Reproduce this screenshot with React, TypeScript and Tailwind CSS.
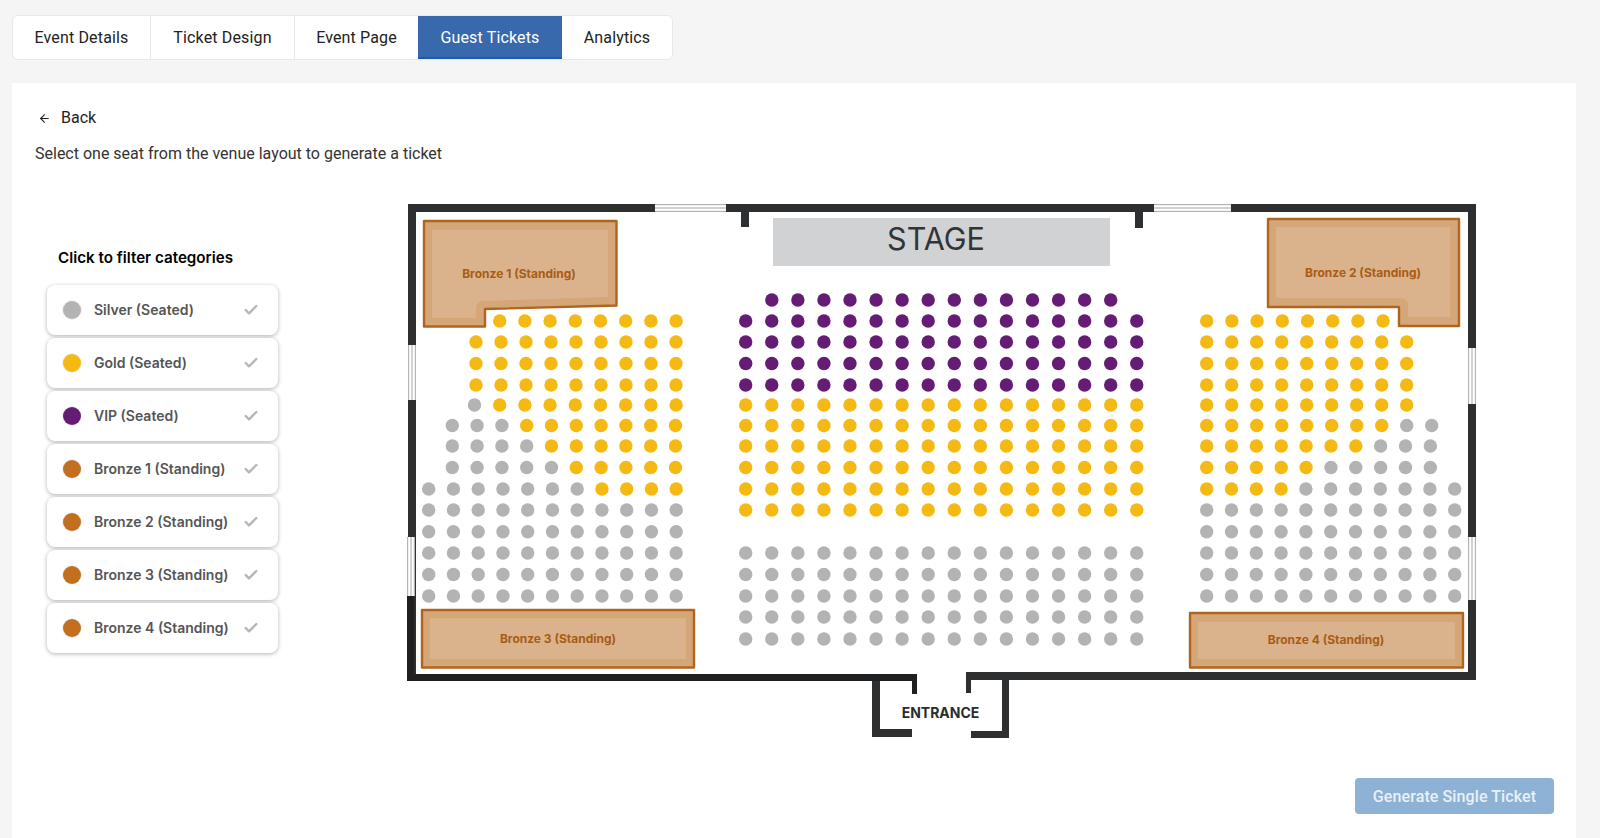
import { ArrowLeft, Check } from "lucide-react";

const GOLD = "#f5b914";
const GRAY = "#b3b3b3";
const VIP = "#651c74";

const tabs = [
  { name: "Event Details", width: "w-[138px] border-r border-[#e7e8ea]" },
  { name: "Ticket Design", width: "w-[144px] border-r border-[#e7e8ea]" },
  { name: "Event Page", width: "w-[123px]" },
  { name: "Guest Tickets", width: "w-[144px] bg-[#3769ac] text-white shadow-[inset_0_-2px_0_#1f5ca8]" },
  { name: "Analytics", width: "w-[110px]" },
];
const categories = [
  { name: "Silver (Seated)", color: GRAY },
  { name: "Gold (Seated)", color: GOLD },
  { name: "VIP (Seated)", color: VIP },
  { name: "Bronze 1 (Standing)", color: "#c2701f" },
  { name: "Bronze 2 (Standing)", color: "#c2701f" },
  { name: "Bronze 3 (Standing)", color: "#c2701f" },
  { name: "Bronze 4 (Standing)", color: "#c2701f" },
];

type Seat = { x: number; y: number; c: string };

// start x, step, y, then [colour, count] runs from left to right
function row(x0: number, step: number, y: number, runs: [string, number][]): Seat[] {
  const out: Seat[] = [];
  let i = 0;
  for (const [c, n] of runs) {
    for (let k = 0; k < n; k++) {
      out.push({ x: x0 + step * i, y, c });
      i++;
    }
  }
  return out;
}

const seats: Seat[] = [
  // center block
  ...row(771.8, 26.07, 300, [[VIP, 14]]),
  ...[321, 342, 363.5, 385].flatMap((y) => row(745.7, 26.07, y, [[VIP, 16]])),
  ...[405, 425.5, 446, 467.5, 489, 510].flatMap((y) => row(745.7, 26.07, y, [[GOLD, 16]])),
  ...[553, 574.5, 596, 617, 639].flatMap((y) => row(745.7, 26.07, y, [[GRAY, 16]])),
  // left block
  ...row(499.7, 25.2, 321, [[GOLD, 8]]),
  ...[342, 363.5, 385].flatMap((y) => row(476, 25, y, [[GOLD, 9]])),
  ...row(474.5, 25.2, 405, [[GRAY, 1], [GOLD, 8]]),
  ...row(452.3, 24.8, 425.5, [[GRAY, 3], [GOLD, 7]]),
  ...row(452.3, 24.8, 446, [[GRAY, 4], [GOLD, 6]]),
  ...row(452.3, 24.8, 467.5, [[GRAY, 5], [GOLD, 5]]),
  ...row(428.7, 24.75, 489, [[GRAY, 7], [GOLD, 4]]),
  ...[510, 531.7, 553, 574.5, 596].flatMap((y) => row(428.7, 24.75, y, [[GRAY, 11]])),
  // right block
  ...row(1206.7, 25.2, 321, [[GOLD, 8]]),
  ...[342, 363.5, 385, 405].flatMap((y) => row(1206.7, 25, y, [[GOLD, 9]])),
  ...row(1206.7, 25, 425.5, [[GOLD, 8], [GRAY, 2]]),
  ...row(1206.7, 24.85, 446, [[GOLD, 7], [GRAY, 3]]),
  ...row(1206.7, 24.85, 467.5, [[GOLD, 5], [GRAY, 5]]),
  ...row(1206.7, 24.8, 489, [[GOLD, 4], [GRAY, 7]]),
  ...[510, 531.7, 553, 574.5, 596].flatMap((y) => row(1206.7, 24.8, y, [[GRAY, 11]])),
];

function HWindow({ x, w, y }: { x: number; w: number; y: number }) {
  return (
    <g>
      <rect x={x} y={y} width={w} height={8} fill="#fff" />
      <rect x={x} y={y} width={w} height={1.2} fill="#b5b5b5" />
      <rect x={x} y={y + 3.4} width={w} height={1.2} fill="#b5b5b5" />
      <rect x={x} y={y + 6.8} width={w} height={1.2} fill="#b5b5b5" />
    </g>
  );
}

function VWindow({ x, y, h }: { x: number; y: number; h: number }) {
  return (
    <g>
      <rect x={x} y={y} width={8} height={h} fill="#fff" />
      <rect x={x} y={y} width={1.2} height={h} fill="#b5b5b5" />
      <rect x={x + 3.4} y={y} width={1.2} height={h} fill="#b5b5b5" />
      <rect x={x + 6.8} y={y} width={1.2} height={h} fill="#b5b5b5" />
    </g>
  );
}

function Zone({ outer, inner, label, lx, ly }: { outer: string; inner: string; label: string; lx: number; ly: number }) {
  return (
    <g>
      <path d={outer} fill="#d4a678" stroke="#b0651e" strokeWidth={2.4} strokeLinejoin="round" />
      <path d={inner} fill="#dab38c" />
      <text
        x={lx}
        y={ly}
        textAnchor="middle"
        dominantBaseline="central"
        fill="#a85c16"
        className="[font-family:Inter,sans-serif] text-[12px] font-bold"
      >
        {label}
      </text>
    </g>
  );
}

function VenueMap() {
  const wall = "#2e2f31";
  return (
    <svg viewBox="400 200 1085 545" className="h-[545px] w-[1085px] shrink-0">
      {/* walls */}
      <rect x={408} y={204} width={1068} height={8} fill={wall} />
      <rect x={408} y={204} width={8} height={475} fill={wall} />
      <rect x={1468} y={204} width={8} height={476} fill={wall} />
      <rect x={407} y={596} width={7} height={85} fill="#1f2022" />
      <rect x={407} y={674} width={510} height={7} fill="#1f2022" />
      <rect x={912} y={674} width={5} height={20} fill="#1f2022" />
      <rect x={966} y={672} width={510} height={8} fill={wall} />
      <rect x={966} y={672} width={5} height={21} fill={wall} />
      <path d="M872 681h8v48h32v8h-40z" fill={wall} />
      <path d="M1002 680h7v58h-38v-7h31z" fill={wall} />
      <rect x={741} y={212} width={8} height={15} fill={wall} />
      <rect x={1135} y={212} width={8} height={16} fill={wall} />

      {/* windows */}
      <HWindow x={655} w={71} y={204} />
      <HWindow x={1154} w={77} y={204} />
      <VWindow x={408} y={345} h={55} />
      <VWindow x={407} y={537} h={59} />
      <VWindow x={1468} y={348} h={56} />
      <VWindow x={1468} y={537} h={63} />

      {/* stage */}
      <rect x={773} y={218} width={337} height={48} fill="#d1d2d4" />
      <text
        x={936}
        y={238}
        textAnchor="middle"
        dominantBaseline="central"
        fill="#333436"
        className="[font-family:Inter,sans-serif] text-[30.5px]"
      >
        STAGE
      </text>

      {/* standing zones */}
      <Zone
        outer="M424 221H616.5V305.5L485 309V326.5H424Z"
        inner="M432 230H608V297L484 301Q476 301 476 309V318H432Z"
        label="Bronze 1 (Standing)"
        lx={519}
        ly={273}
      />
      <Zone
        outer="M1268 219H1459V326H1399V307H1268Z"
        inner="M1276 227H1450V317H1408V306Q1408 298 1400 298H1276Z"
        label="Bronze 2 (Standing)"
        lx={1363}
        ly={272}
      />
      <Zone
        outer="M422 610H694V667.5H422Z"
        inner="M430 618H686V659H430Z"
        label="Bronze 3 (Standing)"
        lx={558}
        ly={638}
      />
      <Zone
        outer="M1190 613H1463V667.5H1190Z"
        inner="M1198 622H1455V659H1198Z"
        label="Bronze 4 (Standing)"
        lx={1326}
        ly={639}
      />

      {/* seats */}
      {seats.map((s, i) => (
        <circle key={i} cx={s.x} cy={s.y} r={6.7} fill={s.c} />
      ))}

      <text
        x={940.5}
        y={712}
        textAnchor="middle"
        dominantBaseline="central"
        fill="#2b2c2e"
        className="[font-family:Inter,sans-serif] text-[14px] font-bold"
      >
        ENTRANCE
      </text>
    </svg>
  );
}

function CategoryList() {
  return (
    <div className="mt-[48px] w-[231px] shrink-0 [font-family:Inter,sans-serif]">
      <h3 className="mb-[17px] pl-[11px] text-[15.2px] leading-5 font-semibold text-black">Click to filter categories</h3>
      <div className="flex flex-col gap-[3px]">
        {categories.map((c) => (
          <div
            key={c.name}
            className="flex h-[50px] items-center rounded-lg bg-white pr-[19px] pl-4 shadow-[0_1px_4px_rgba(0,0,0,0.3)]"
          >
            <span
              className="h-[18px] w-[18px] rounded-full shadow-[0_0_0_1px_rgba(0,0,0,0.06)]"
              style={{ backgroundColor: c.color }}
            />
            <span className="ml-[13px] flex-1 text-sm font-semibold text-[#555]">{c.name}</span>
            <Check size={16} strokeWidth={3.5} className="text-[#b5b5b5]" />
          </div>
        ))}
      </div>
    </div>
  );
}

export default function App() {
  return (
    <div className="flex h-[838px] flex-col overflow-hidden bg-[#f5f5f5] pt-[15px] pr-6 pl-3 [font-family:Roboto,sans-serif]">
      <div className="flex h-[45px] w-fit rounded-md border border-[#e7e8ea] bg-white text-base tracking-[0.15px] text-[#222]">
        {tabs.map((t) => (
          <div key={t.name} className={`flex items-center justify-center pt-px ${t.width}`}>
            {t.name}
          </div>
        ))}
      </div>

      <main className="mt-[23px] flex min-h-0 flex-1 flex-col bg-white pt-[25px] pr-[22px] pl-[23px]">
        <div className="flex h-5 items-center text-base text-[#222]">
          <ArrowLeft size={13} className="ml-[3px]" />
          <span className="ml-[10px]">Back</span>
        </div>
        <p className="mt-[14px] text-base leading-6 text-[#333]">Select one seat from the venue layout to generate a ticket</p>

        <div className="mt-[34px] flex items-start pl-3">
          <CategoryList />
          <div className="ml-[122px]">
            <VenueMap />
          </div>
        </div>

        <div className="mt-auto mb-[24px] flex justify-end">
          <button className="h-9 w-[199px] rounded bg-[#8db2d6] pt-px text-base font-medium tracking-[0.1px] text-[#e9f0f7]">
            Generate Single Ticket
          </button>
        </div>
      </main>
    </div>
  );
}
